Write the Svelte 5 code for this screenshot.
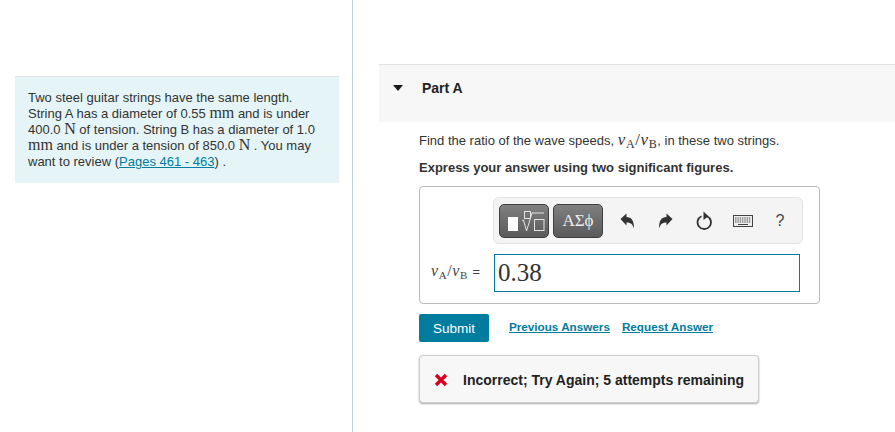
<script>
  const tools = ["undo", "redo", "reset", "keyboard"];
</script>

<div class="page">
  <aside class="intro-col">
    <div class="intro">
      Two steel guitar strings have the same length.<br />
      String A has a diameter of 0.55 <span class="unit">mm</span> and is under<br />
      400.0 <span class="unit">N</span> of tension. String B has a diameter of 1.0<br />
      <span class="unit">mm</span> and is under a tension of 850.0 <span class="unit">N</span> . You may<br />
      want to review (<a href="#p">Pages 461 - 463</a>) .
    </div>
  </aside>

  <main class="part-col">
    <header class="part-head">
      <span class="caret"></span>
      <h2>Part A</h2>
    </header>

    <div class="part-body">
      <p class="question">
        Find the ratio of the wave speeds, <span class="math"><i>v</i><sub>A</sub>/<i>v</i><sub>B</sub></span>, in these two strings.
      </p>
      <p class="instruction">Express your answer using two significant figures.</p>

      <div class="answer-box">
        <div class="toolbar">
          <button class="tpl" aria-label="Templates">
            <svg width="49" height="34" viewBox="0 0 49 34">
              <rect x="8" y="13" width="10" height="14" fill="#fff" />
              <rect x="24.500" y="7.500" width="6" height="7" fill="none" stroke="#e4e4e4" />
              <path d="M22 16.500l1.500-.5 3 11 5.500-18h12" fill="none" stroke="#e4e4e4" />
              <rect x="34.500" y="15.500" width="9.500" height="11" fill="none" stroke="#e4e4e4" />
            </svg>
          </button>
          <button class="tpl greek">ΑΣϕ</button>
          <div class="tools">
            {#each tools as t}
              <span class="tool">
                {#if t === "undo"}
                  <svg width="15" height="16" viewBox="0 0 15 16"><path d="M0.500 6L6.500 0.500v3.500c5 0 7.500 3.500 7.500 11.500-1.500-4.500-3.500-6-7.500-6v3z" fill="#333" /></svg>
                {:else if t === "redo"}
                  <svg width="15" height="16" viewBox="0 0 15 16"><path d="M14.500 6L8.500 0.500v3.500c-5 0-7.500 3.500-7.500 11.500 1.500-4.500 3.500-6 7.500-6v3z" fill="#333" /></svg>
                {:else if t === "reset"}
                  <svg width="17" height="20" viewBox="0 0 17 20"><path d="M11 5.200a6.700 6.700 0 1 1-5.500 0" fill="none" stroke="#333" stroke-width="1.800" /><path d="M7.500 0.500l5 4.700-5 3.800z" fill="#333" /></svg>
                {:else}
                  <svg width="20" height="12" viewBox="0 0 20 12"><rect x="0.500" y="0.500" width="19" height="11" fill="#eee" stroke="#444" /><path d="M2 3h16M2 5h16M2 7h16" stroke="#555" stroke-dasharray="1.500 0.800" /><path d="M5 9.500h10" stroke="#444" /></svg>
                {/if}
              </span>
            {/each}
            <span class="tool help">?</span>
          </div>
        </div>
        <div class="answer-row">
          <span class="label math"><i>v</i><sub>A</sub>/<i>v</i><sub>B</sub> <span class="eq">=</span></span>
          <div class="input">0.38</div>
        </div>
      </div>

      <div class="actions">
        <button class="submit">Submit</button>
        <a href="#a" class="link">Previous Answers</a>
        <a href="#b" class="link">Request Answer</a>
      </div>

      <div class="feedback">
        <svg width="14" height="14" viewBox="0 0 14 14"><path d="M2 2l10 10M12 2L2 12" stroke="#d9001b" stroke-width="3.400" /></svg>
        <span>Incorrect; Try Again; 5 attempts remaining</span>
      </div>
    </div>
  </main>
</div>

<style>
  :global(body) {
    margin: 0;
    background: #fff;
  }

  .page {
    display: flex;
    width: 895px;
    height: 432px;
    overflow: hidden;
    font-family: "Liberation Sans", Arial, sans-serif;
    font-size: 13px;
    color: #333;
  }

  .intro-col {
    box-sizing: border-box;
    width: 353px;
    flex: none;
    padding: 76px 13px 0 15px;
    border-right: 1px solid #b9d0e4;
  }

  .intro {
    box-sizing: border-box;
    height: 107px;
    padding: 13px 13px 0;
    background: #e5f5f7;
    border-top: 1px solid #dde5e6;
    line-height: 16px;
    white-space: nowrap;
  }

  .unit {
    font-family: "Liberation Serif", serif;
    font-size: 16px;
    line-height: 0;
  }

  .intro a {
    color: #007c9e;
  }

  .part-col {
    flex: 1;
    min-width: 0;
    padding: 64px 0 0 26px;
  }

  .part-head {
    box-sizing: border-box;
    display: flex;
    height: 58px;
    padding: 15px 0 0 14px;
    gap: 19px;
    background: #f7f7f7;
    border-top: 1px solid #e2e2e2;
  }

  .caret {
    width: 0;
    height: 0;
    margin-top: 5px;
    border-left: 5px solid transparent;
    border-right: 5px solid transparent;
    border-top: 6px solid #1a1a1a;
  }

  h2 {
    margin: 0;
    font-size: 14px;
    font-weight: 700;
    line-height: 16px;
    color: #222;
  }

  .part-body {
    padding: 10px 0 0 40px;
  }

  p {
    margin: 0;
  }

  .question {
    height: 20px;
    line-height: 18px;
  }

  .math {
    font-family: "Liberation Serif", serif;
    font-size: 17px;
    line-height: 0;
    letter-spacing: 0.600px;
  }

  .math sub {
    font-size: 12px;
    line-height: 0;
    vertical-align: -3px;
  }

  .instruction {
    margin-top: 8px;
    font-size: 13px;
    font-weight: 700;
    line-height: 16px;
  }

  .answer-box {
    box-sizing: border-box;
    width: 401px;
    height: 118px;
    margin-top: 10px;
    padding: 10px 19px 0 11px;
    border: 1px solid #bbb;
    border-radius: 4px;
  }

  .toolbar {
    box-sizing: border-box;
    display: flex;
    gap: 4px;
    width: 310px;
    height: 47px;
    margin-left: 62px;
    padding: 6px 5px;
    background: #f4f4f4;
    border: 1px solid #e2e2e2;
    border-radius: 6px;
  }

  .tpl {
    box-sizing: border-box;
    width: 50px;
    height: 34px;
    padding: 0;
    border: 1px solid #3f3f3f;
    border-radius: 5px;
    background: linear-gradient(#808080, #5a5a5a);
    display: flex;
    align-items: center;
    justify-content: center;
  }

  .tpl svg {
    flex: none;
  }

  .greek {
    color: #eee;
    font-family: "Liberation Serif", serif;
    font-size: 17px;
  }

  .tools {
    display: flex;
    align-items: center;
    height: 34px;
    margin-left: 10px;
    gap: 18.500px;
  }

  .tool {
    display: flex;
    justify-content: center;
    width: 20px;
  }

  .help {
    margin-left: -1px;
    font-size: 16px;
    color: #444;
  }

  .answer-row {
    display: flex;
    align-items: center;
    gap: 10px;
    margin-top: 10px;
  }

  .label {
    width: 53px;
    font-size: 16px;
    color: #444;
    white-space: nowrap;
  }

  .label sub {
    font-size: 11px;
  }

  .eq {
    font-family: "Liberation Sans", sans-serif;
    font-size: 13px;
  }

  .input {
    box-sizing: border-box;
    flex: none;
    width: 306px;
    height: 38px;
    padding-left: 3px;
    border: 1px solid #007c9e;
    font-family: "Liberation Serif", serif;
    font-size: 25px;
    line-height: 36px;
  }

  .actions {
    display: flex;
    align-items: flex-start;
    margin-top: 10px;
  }

  .submit {
    width: 70px;
    height: 28px;
    padding: 0;
    border: none;
    border-radius: 2px;
    background: #007c9e;
    color: #fff;
    font-family: inherit;
    font-size: 13.500px;
  }

  .link {
    margin-left: 12px;
    margin-top: 5px;
    color: #007c9e;
    font-weight: 700;
    font-size: 11.700px;
    line-height: 16px;
  }

  .actions .link:first-of-type {
    margin-left: 20px;
  }

  .feedback {
    box-sizing: border-box;
    display: flex;
    align-items: center;
    gap: 15px;
    width: 340px;
    height: 48px;
    margin-top: 13px;
    padding: 1px 0 0 14px;
    background: #f7f7f7;
    border: 1px solid #ccc;
    border-radius: 4px;
    box-shadow: 0 1px 2px #aaa;
    font-size: 14px;
    font-weight: 700;
    color: #222;
  }
</style>
